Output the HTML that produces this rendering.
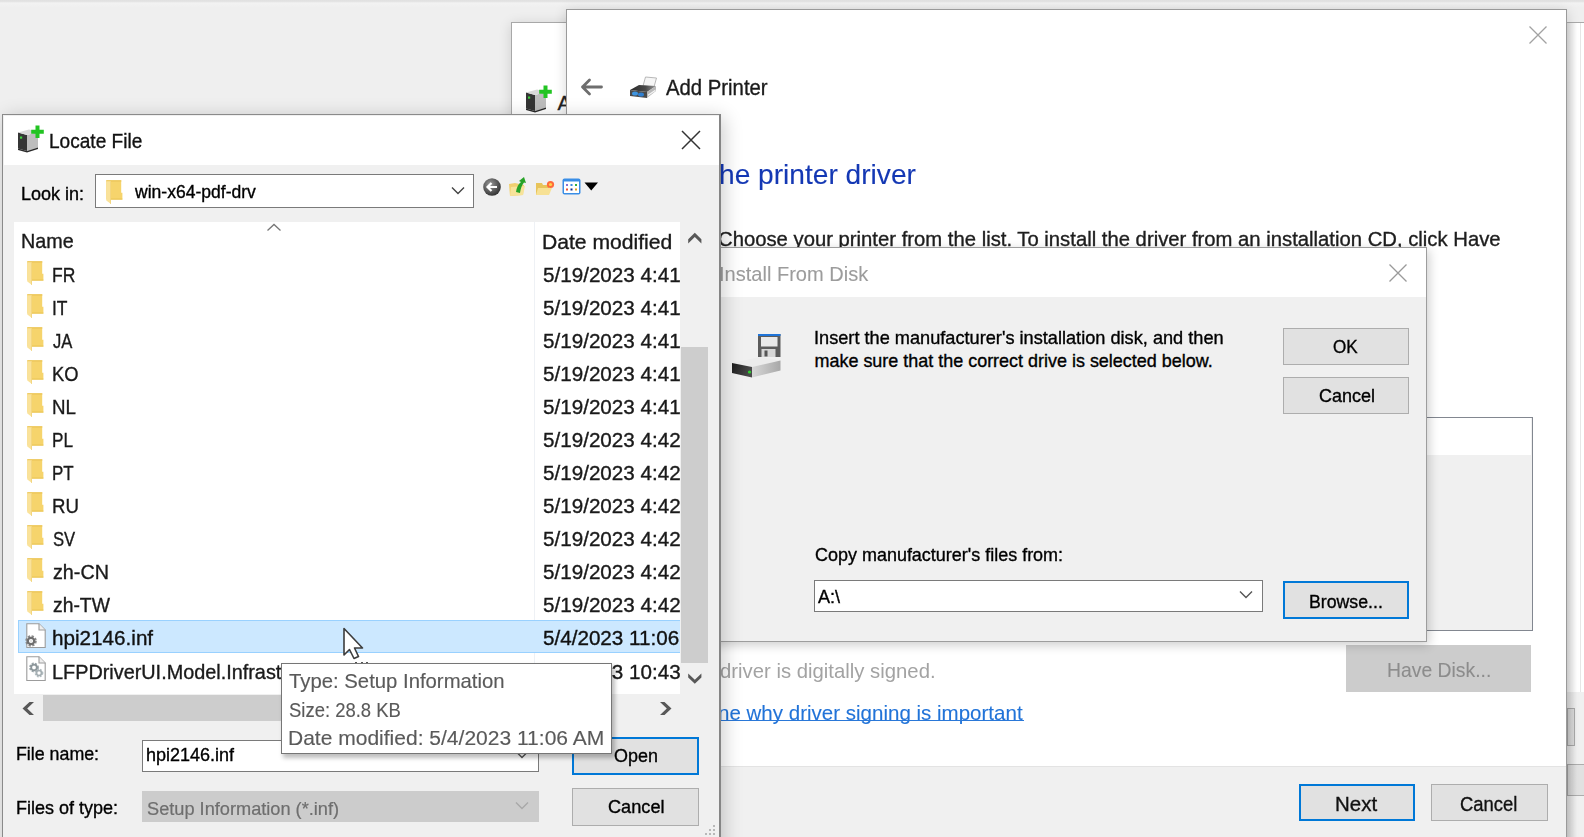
<!DOCTYPE html>
<html><head><meta charset="utf-8"><style>
html,body{margin:0;padding:0}
body{width:1584px;height:837px;overflow:hidden;position:relative;background:#efefef;font-family:'Liberation Sans',sans-serif}
div{box-sizing:border-box}
.t{position:absolute;white-space:nowrap;line-height:1;transform-origin:0 0;font-family:'Liberation Sans',sans-serif;-webkit-text-stroke:0.35px currentColor}
.a{position:absolute}

.win{position:absolute;background:#fff;border:1px solid #9b9b9b}
.btn{position:absolute;background:#e1e1e1;border:1px solid #adadad}
.btnf{position:absolute;background:#e1e1e1;border:2px solid #0078d7}

</style></head><body>
<div class="a" style="left:0;top:0;width:1584px;height:8px;background:linear-gradient(to bottom,#e0e0e0 0px,#e4e4e4 1.5px,#f2f2f2 3px,#efefef 8px)"></div>
<div class="a" style="left:1560px;top:22px;width:30px;height:820px;background:#fff;border-top:1px solid #a9a9a9"></div>
<div class="a" style="left:1566px;top:692px;width:20px;height:150px;background:#f0f0f0"></div>
<div class="a" style="left:1580px;top:23px;width:1px;height:669px;background:#e6e6e6"></div>
<div class="a" style="left:1567px;top:708px;width:8px;height:38px;border:1px solid #adadad;background:#e1e1e1"></div>
<div class="a" style="left:1567px;top:764px;width:20px;height:32px;border:1px solid #adadad;background:#e1e1e1"></div>
<div class="win" style="left:511px;top:22px;width:120px;height:200px;border-color:#a8a8a8;box-shadow:0 2px 12px rgba(0,0,0,0.14)"></div>
<svg class="a" style="left:525px;top:84px" width="28" height="29" viewBox="0 0 28 29">
<path d="M1 8.5 L10 11 L10 27 L1 24.5 Z" fill="#353535"/>
<path d="M10 11 L21 8 L21 23.5 L10 27 Z" fill="#bdbdbd"/>
<path d="M1 8.5 L12 5.5 L21 8 L10 11 Z" fill="#d9d9d9"/>
<path d="M1 24.5 L10 27 L21 23.5 L21 25 L10 28.5 L1 26 Z" fill="#2a2a2a"/>
<rect x="3" y="12.5" width="2.2" height="2.2" fill="#3fd13f"/>
<path d="M18.5 1.5h4v4.3h4.3v4h-4.3v4.3h-4v-4.3h-4.3v-4h4.3z" fill="#22c422"/>
</svg>
<div class="t" style="left:557.50px;top:92.81px;font-size:20.58px;color:#222;">A</div>
<div class="win" style="left:566px;top:9px;width:1001px;height:840px;border-color:#9a9a9a;box-shadow:0 2px 12px rgba(0,0,0,0.16)"></div>
<div class="a" style="left:1567px;top:23px;width:10px;height:820px;background:linear-gradient(to right,rgba(0,0,0,0.14),rgba(0,0,0,0))"></div>
<svg class="a" style="left:1528px;top:25px" width="20" height="20" viewBox="0 0 20 20"><path d="M1.5 1.5L18.5 18.5M18.5 1.5L1.5 18.5" stroke="#a2a2a2" stroke-width="1.25"/></svg>
<svg class="a" style="left:579px;top:77px" width="25" height="20" viewBox="0 0 25 20"><path d="M22.5 10H3.5M10.5 3L3.5 10L10.5 17" fill="none" stroke="#6e6e6e" stroke-width="2.8" stroke-linecap="round" stroke-linejoin="round"/></svg>
<svg class="a" style="left:628px;top:75px" width="31" height="25" viewBox="0 0 31 25">
<defs><linearGradient id="pg" x1="0" y1="0" x2="1" y2="0"><stop offset="0" stop-color="#2a2a2a"/><stop offset="0.6" stop-color="#4a4a4a"/><stop offset="1" stop-color="#9a9a9a"/></linearGradient></defs>
<path d="M15 11 L17.5 2 L28.5 3 L26 12 Z" fill="#f6f6f6" stroke="#b0b0b0" stroke-width="0.9"/>
<path d="M2 15 L11 10 L28 11 L19 17 Z" fill="url(#pg)"/>
<path d="M2 15 L19 17 L19 23 L2 21 Z" fill="#4a4a4a"/>
<path d="M19 17 L28 11 L28 16 L19 23 Z" fill="#b8b8b8"/>
<path d="M20 19.5 L27.5 14.5 L27.5 16 L20 21 Z" fill="#f4f4f4"/>
<ellipse cx="7" cy="18.5" rx="3" ry="2" fill="#3d94e0"/>
<ellipse cx="13" cy="19.5" rx="3" ry="2" fill="#2f7fd0"/>
</svg>
<div class="t" style="left:666.00px;top:78.17px;font-size:21.45px;color:#1b1b1b;transform:scaleX(0.9477);">Add Printer</div>
<div class="t" style="left:719.49px;top:161.15px;font-size:27.83px;color:#1438b4;transform:scaleX(1.0103);-webkit-text-stroke:0.1px #1438b4;">he printer driver</div>
<div class="t" style="left:717.97px;top:230.45px;font-size:19.71px;color:#1e1e1e;transform:scaleX(1.0296);">Choose your printer from the list. To install the driver from an installation CD, click Have</div>
<div class="a" style="left:1300px;top:416.5px;width:233px;height:214px;border:1px solid #828790;background:#f0f0f0"></div>
<div class="a" style="left:1301px;top:417.5px;width:230px;height:37.5px;background:#fff"></div>
<div class="t" style="left:719.50px;top:660.58px;font-size:20.14px;color:#a3a3a3;transform:scaleX(1.0092);-webkit-text-stroke:0;">driver is digitally signed.</div>
<div class="a" style="left:1346px;top:645px;width:185px;height:47px;background:#cccccc"></div>
<div class="t" style="left:1387.44px;top:660.48px;font-size:20.14px;color:#8c8c8c;transform:scaleX(0.9614);-webkit-text-stroke:0.1px #8c8c8c;">Have Disk...</div>
<div class="t" style="left:718.48px;top:703.48px;font-size:20.14px;color:#2173d8;transform:scaleX(1.0199);-webkit-text-stroke:0.1px #2173d8;">ne why driver signing is important</div>
<div class="a" style="left:719px;top:720px;width:305px;height:1.4px;background:#2a78d8"></div>
<div class="a" style="left:567px;top:766px;width:999px;height:80px;background:#f0f0f0;border-top:1px solid #e3e3e3"></div>
<div class="btnf" style="left:1299px;top:784px;width:116px;height:37px"></div>
<div class="t" style="left:1335.47px;top:795.42px;font-size:19.86px;color:#111;transform:scaleX(1.0301);">Next</div>
<div class="btn" style="left:1431px;top:784px;width:117px;height:37px"></div>
<div class="t" style="left:1460.07px;top:795.42px;font-size:19.86px;color:#111;transform:scaleX(0.9278);">Cancel</div>
<div class="a" style="left:690px;top:247px;width:737px;height:395px;background:#f0f0f0;border:1px solid #9d9d9d;box-shadow:2px 3px 10px rgba(0,0,0,0.2)"></div>
<div class="a" style="left:691px;top:248px;width:735px;height:49px;background:#fff"></div>
<div class="t" style="left:719.02px;top:264.13px;font-size:20.43px;color:#9c9c9c;transform:scaleX(0.9813);-webkit-text-stroke:0.1px #9c9c9c;">Install From Disk</div>
<svg class="a" style="left:1388px;top:263px" width="20" height="20" viewBox="0 0 20 20"><path d="M1.5 1.5L18.5 18.5M18.5 1.5L1.5 18.5" stroke="#9a9a9a" stroke-width="1.3"/></svg>
<svg class="a" style="left:730px;top:332px" width="53" height="47" viewBox="0 0 53 47">
<defs><linearGradient id="hf" x1="0" y1="0" x2="1" y2="0.3"><stop offset="0" stop-color="#1c1c1c"/><stop offset="1" stop-color="#4a4a4a"/></linearGradient>
<linearGradient id="hr" x1="0" y1="0" x2="1" y2="0"><stop offset="0" stop-color="#d8d8d8"/><stop offset="1" stop-color="#a8a8a8"/></linearGradient></defs>
<rect x="28" y="2" width="22.5" height="23" fill="#5c5c5c"/>
<rect x="28" y="2" width="22.5" height="2" fill="#1f74d8"/>
<rect x="31" y="5" width="16.5" height="9.5" fill="#e9e9e9"/>
<rect x="31.5" y="17" width="14" height="8" fill="#d6d6d6"/>
<rect x="34.5" y="18.5" width="3" height="6" fill="#555"/>
<path d="M2 31 L30 25 L50.5 28.5 L22 35 Z" fill="#ececec"/>
<path d="M2 31 L22 35 L22 45.5 L2 41 Z" fill="url(#hf)"/>
<path d="M22 35 L50.5 28.5 L50.5 38.5 L22 45.5 Z" fill="url(#hr)"/>
<circle cx="19.5" cy="40" r="1.6" fill="#2fd42f"/>
</svg>
<div class="t" style="left:814.49px;top:329.92px;font-size:17.97px;color:#000;transform:scaleX(1.0125);">Insert the manufacturer's installation disk, and then</div>
<div class="t" style="left:814.50px;top:352.72px;font-size:17.97px;color:#000;">make sure that the correct drive is selected below.</div>
<div class="btn" style="left:1283px;top:328px;width:126px;height:37px"></div>
<div class="t" style="left:1333.30px;top:337.78px;font-size:18.26px;color:#000;transform:scaleX(0.9353);">OK</div>
<div class="btn" style="left:1283px;top:377px;width:126px;height:37px"></div>
<div class="t" style="left:1318.50px;top:386.78px;font-size:18.26px;color:#000;transform:scaleX(0.9865);">Cancel</div>
<div class="t" style="left:814.80px;top:546.48px;font-size:18.26px;color:#000;transform:scaleX(0.9845);">Copy manufacturer's files from:</div>
<div class="a" style="left:814px;top:580px;width:449px;height:32px;background:#fff;border:1px solid #7a7a7a"></div>
<div class="t" style="left:818.00px;top:587.88px;font-size:18.26px;color:#000;transform:scaleX(0.9895);">A:\</div>
<svg class="a" style="left:1239px;top:590px" width="14" height="9" viewBox="0 0 14 9"><path d="M1 1.5L7 7.5L13 1.5" fill="none" stroke="#555" stroke-width="1.4"/></svg>
<div class="btnf" style="left:1283px;top:581px;width:126px;height:38px"></div>
<div class="t" style="left:1308.53px;top:592.78px;font-size:18.26px;color:#000;transform:scaleX(0.9703);">Browse...</div>
<div class="a" style="left:2px;top:114px;width:719px;height:740px;background:#f0f0f0;border:1.5px solid #8a8a8a;border-right:2px solid #858585;box-shadow:3px 3px 18px rgba(0,0,0,0.2)"></div>
<div class="a" style="left:3.5px;top:115.5px;width:715.5px;height:49.5px;background:#fff"></div>
<svg class="a" style="left:17px;top:124px" width="28" height="29" viewBox="0 0 28 29">
<path d="M1 8.5 L10 11 L10 27 L1 24.5 Z" fill="#353535"/>
<path d="M10 11 L21 8 L21 23.5 L10 27 Z" fill="#bdbdbd"/>
<path d="M1 8.5 L12 5.5 L21 8 L10 11 Z" fill="#d9d9d9"/>
<path d="M1 24.5 L10 27 L21 23.5 L21 25 L10 28.5 L1 26 Z" fill="#2a2a2a"/>
<rect x="3" y="12.5" width="2.2" height="2.2" fill="#3fd13f"/>
<path d="M18.5 1.5h4v4.3h4.3v4h-4.3v4.3h-4v-4.3h-4.3v-4h4.3z" fill="#22c422"/>
</svg>
<div class="t" style="left:48.87px;top:131.23px;font-size:20.43px;color:#111;transform:scaleX(0.9336);">Locate File</div>
<svg class="a" style="left:680px;top:129px" width="22" height="22" viewBox="0 0 22 22"><path d="M2 2L20 20M20 2L2 20" stroke="#333" stroke-width="1.5"/></svg>
<div class="t" style="left:21.03px;top:185.03px;font-size:18.55px;color:#000;transform:scaleX(0.9720);">Look in:</div>
<div class="a" style="left:95px;top:174px;width:379px;height:34px;background:#fff;border:1px solid #7a7a7a"></div>
<svg class="a" style="left:106px;top:180px" width="18" height="26" viewBox="0 0 18 26">
<path d="M0.3 0.3 H15.2 V12.8 H16.4 V19.6 H0.3 Z" fill="#f6d46c"/>
<rect x="0.3" y="0.3" width="15" height="1.3" fill="#ecc65a"/>
<rect x="4.8" y="18.6" width="11.6" height="1" fill="#e9c350"/>
<path d="M0.3 1.2 H5 V24 L0.3 20.4 Z" fill="#fae29a"/>
<path d="M4.4 1.2 H5 V24 H4.4Z" fill="#efcf72"/>
</svg>
<div class="t" style="left:134.99px;top:184.27px;font-size:17.68px;color:#000;transform:scaleX(0.9923);">win-x64-pdf-drv</div>
<svg class="a" style="left:451px;top:186px" width="14" height="9" viewBox="0 0 14 9"><path d="M1 1.5L7 7.5L13 1.5" fill="none" stroke="#444" stroke-width="1.4"/></svg>
<svg class="a" style="left:482px;top:177px" width="20" height="20" viewBox="0 0 20 20">
<defs><radialGradient id="gb" cx="0.4" cy="0.35" r="0.7"><stop offset="0" stop-color="#9a9a9a"/><stop offset="1" stop-color="#2e2e2e"/></radialGradient></defs>
<circle cx="10" cy="10" r="8.8" fill="url(#gb)"/>
<path d="M15 10H6M9.5 6L5.5 10L9.5 14" fill="none" stroke="#fff" stroke-width="2.2"/>
</svg>
<svg class="a" style="left:508px;top:176px" width="20" height="21" viewBox="0 0 20 21">
<path d="M1 8 L7 7 L16 9 L15 19 L2 20 Z" fill="#f0d070"/>
<path d="M3 11 L17 10 L15 19 L2 20 Z" fill="#f7e39a"/>
<path d="M8 16 Q9 9 13 6 L11 5 L16 1 L18 7 L16 6.5 Q13 10 12 17 Z" fill="#27a327"/>
</svg>
<svg class="a" style="left:535px;top:180px" width="20" height="16" viewBox="0 0 20 16">
<path d="M1 3 L7 3 L8 5 L14 5 L14 15 L1 15 Z" fill="#e8c45a"/>
<path d="M3 8 L17 8 L14 15 L1 15 Z" fill="#f7e194"/>
<circle cx="15.5" cy="4.5" r="3.6" fill="#ff6a3a"/><circle cx="15.5" cy="4.5" r="1.6" fill="#ffd24a"/>
</svg>
<svg class="a" style="left:562px;top:178px" width="19" height="17" viewBox="0 0 19 17">
<rect x="0.5" y="0.5" width="18" height="16" rx="2" fill="#3a8ee6"/>
<rect x="2" y="3.5" width="15" height="11.5" fill="#fff"/>
<rect x="4" y="6" width="2" height="2" fill="#8a6fd0"/><rect x="8.5" y="6" width="2" height="2" fill="#3b8be0"/><rect x="13" y="6" width="2" height="2" fill="#30b040"/>
<rect x="4" y="10.5" width="2" height="2" fill="#f05030"/><rect x="8.5" y="10.5" width="2" height="2" fill="#0a2a90"/><rect x="13" y="10.5" width="2" height="2" fill="#e0a020"/>
</svg>
<svg class="a" style="left:584px;top:182px" width="15" height="9" viewBox="0 0 15 9"><path d="M0.5 0.5H14L7.25 8.5Z" fill="#000"/></svg>
<div class="a" style="left:14px;top:222px;width:666px;height:472px;background:#fff"></div>
<div class="a" style="left:534px;top:222px;width:1px;height:472px;background:#eef1f5"></div>
<svg class="a" style="left:266px;top:223px" width="16" height="9" viewBox="0 0 16 9"><path d="M1.5 7.5L8 1.5L14.5 7.5" fill="none" stroke="#777" stroke-width="1.3"/></svg>
<div class="t" style="left:20.52px;top:231.38px;font-size:20.14px;color:#1a1a1a;transform:scaleX(0.9811);">Name</div>
<div class="t" style="left:541.65px;top:231.68px;font-size:20.14px;color:#1a1a1a;transform:scaleX(1.0494);">Date modified</div>
<div class="a" style="left:680px;top:222px;width:28px;height:472px;background:#f0f0f0"></div>
<div class="a" style="left:681px;top:347px;width:27px;height:316px;background:#cdcdcd"></div>
<svg class="a" style="left:687px;top:232px" width="16" height="13" viewBox="0 0 16 13"><path d="M1.2 7.2 L7.8 0.8 L14.4 7.2 L14.4 11.4 L7.8 5 L1.2 11.4 Z" fill="#585858"/></svg>
<svg class="a" style="left:687px;top:672px" width="16" height="13" viewBox="0 0 16 13"><path d="M1.2 5.4 L7.8 11.8 L14.4 5.4 L14.4 1.4 L7.8 7.8 L1.2 1.4 Z" fill="#585858"/></svg>
<div class="a" style="left:14px;top:694px;width:666px;height:27px;background:#f0f0f0"></div>
<div class="a" style="left:43px;top:695px;width:310px;height:26px;background:#cdcdcd"></div>
<svg class="a" style="left:21px;top:701px" width="15" height="15" viewBox="0 0 15 15"><path d="M8.5 1 L1.5 7.5 L8.5 14 L13 14 L6.2 7.5 L13 1 Z" fill="#585858"/></svg>
<svg class="a" style="left:658px;top:701px" width="15" height="15" viewBox="0 0 15 15"><path d="M6.5 1 L13.5 7.5 L6.5 14 L2 14 L8.8 7.5 L2 1 Z" fill="#585858"/></svg>
<div class="a" style="left:18px;top:620px;width:662px;height:33px;background:#cce8ff;border:1px solid #99d1ff;border-right:none"></div>
<svg class="a" style="left:27px;top:261px" width="18" height="26" viewBox="0 0 18 26">
<path d="M0.3 0.3 H15.2 V12.8 H16.4 V19.6 H0.3 Z" fill="#f6d46c"/>
<rect x="0.3" y="0.3" width="15" height="1.3" fill="#ecc65a"/>
<rect x="4.8" y="18.6" width="11.6" height="1" fill="#e9c350"/>
<path d="M0.3 1.2 H5 V24 L0.3 20.4 Z" fill="#fae29a"/>
<path d="M4.4 1.2 H5 V24 H4.4Z" fill="#efcf72"/>
</svg>
<div class="t" style="left:52.33px;top:265.38px;font-size:20.14px;color:#1a1a1a;transform:scaleX(0.8698);">FR</div>
<div class="a" style="left:535px;top:259.7px;width:145px;height:30px;overflow:hidden">
<div class="t" style="left:7.70px;top:5.68px;font-size:20.14px;color:#1a1a1a;transform:scaleX(1.0250);">5/19/2023 4:41</div>
</div>
<svg class="a" style="left:27px;top:294px" width="18" height="26" viewBox="0 0 18 26">
<path d="M0.3 0.3 H15.2 V12.8 H16.4 V19.6 H0.3 Z" fill="#f6d46c"/>
<rect x="0.3" y="0.3" width="15" height="1.3" fill="#ecc65a"/>
<rect x="4.8" y="18.6" width="11.6" height="1" fill="#e9c350"/>
<path d="M0.3 1.2 H5 V24 L0.3 20.4 Z" fill="#fae29a"/>
<path d="M4.4 1.2 H5 V24 H4.4Z" fill="#efcf72"/>
</svg>
<div class="t" style="left:52.33px;top:298.38px;font-size:20.14px;color:#1a1a1a;transform:scaleX(0.8679);">IT</div>
<div class="a" style="left:535px;top:292.7px;width:145px;height:30px;overflow:hidden">
<div class="t" style="left:7.70px;top:5.68px;font-size:20.14px;color:#1a1a1a;transform:scaleX(1.0250);">5/19/2023 4:41</div>
</div>
<svg class="a" style="left:27px;top:327px" width="18" height="26" viewBox="0 0 18 26">
<path d="M0.3 0.3 H15.2 V12.8 H16.4 V19.6 H0.3 Z" fill="#f6d46c"/>
<rect x="0.3" y="0.3" width="15" height="1.3" fill="#ecc65a"/>
<rect x="4.8" y="18.6" width="11.6" height="1" fill="#e9c350"/>
<path d="M0.3 1.2 H5 V24 L0.3 20.4 Z" fill="#fae29a"/>
<path d="M4.4 1.2 H5 V24 H4.4Z" fill="#efcf72"/>
</svg>
<div class="t" style="left:53.20px;top:331.38px;font-size:20.14px;color:#1a1a1a;transform:scaleX(0.8229);">JA</div>
<div class="a" style="left:535px;top:325.7px;width:145px;height:30px;overflow:hidden">
<div class="t" style="left:7.70px;top:5.68px;font-size:20.14px;color:#1a1a1a;transform:scaleX(1.0250);">5/19/2023 4:41</div>
</div>
<svg class="a" style="left:27px;top:360px" width="18" height="26" viewBox="0 0 18 26">
<path d="M0.3 0.3 H15.2 V12.8 H16.4 V19.6 H0.3 Z" fill="#f6d46c"/>
<rect x="0.3" y="0.3" width="15" height="1.3" fill="#ecc65a"/>
<rect x="4.8" y="18.6" width="11.6" height="1" fill="#e9c350"/>
<path d="M0.3 1.2 H5 V24 L0.3 20.4 Z" fill="#fae29a"/>
<path d="M4.4 1.2 H5 V24 H4.4Z" fill="#efcf72"/>
</svg>
<div class="t" style="left:52.29px;top:364.38px;font-size:20.14px;color:#1a1a1a;transform:scaleX(0.9116);">KO</div>
<div class="a" style="left:535px;top:358.7px;width:145px;height:30px;overflow:hidden">
<div class="t" style="left:7.70px;top:5.68px;font-size:20.14px;color:#1a1a1a;transform:scaleX(1.0250);">5/19/2023 4:41</div>
</div>
<svg class="a" style="left:27px;top:393px" width="18" height="26" viewBox="0 0 18 26">
<path d="M0.3 0.3 H15.2 V12.8 H16.4 V19.6 H0.3 Z" fill="#f6d46c"/>
<rect x="0.3" y="0.3" width="15" height="1.3" fill="#ecc65a"/>
<rect x="4.8" y="18.6" width="11.6" height="1" fill="#e9c350"/>
<path d="M0.3 1.2 H5 V24 L0.3 20.4 Z" fill="#fae29a"/>
<path d="M4.4 1.2 H5 V24 H4.4Z" fill="#efcf72"/>
</svg>
<div class="t" style="left:52.27px;top:397.38px;font-size:20.14px;color:#1a1a1a;transform:scaleX(0.9293);">NL</div>
<div class="a" style="left:535px;top:391.7px;width:145px;height:30px;overflow:hidden">
<div class="t" style="left:7.70px;top:5.68px;font-size:20.14px;color:#1a1a1a;transform:scaleX(1.0250);">5/19/2023 4:41</div>
</div>
<svg class="a" style="left:27px;top:426px" width="18" height="26" viewBox="0 0 18 26">
<path d="M0.3 0.3 H15.2 V12.8 H16.4 V19.6 H0.3 Z" fill="#f6d46c"/>
<rect x="0.3" y="0.3" width="15" height="1.3" fill="#ecc65a"/>
<rect x="4.8" y="18.6" width="11.6" height="1" fill="#e9c350"/>
<path d="M0.3 1.2 H5 V24 L0.3 20.4 Z" fill="#fae29a"/>
<path d="M4.4 1.2 H5 V24 H4.4Z" fill="#efcf72"/>
</svg>
<div class="t" style="left:52.35px;top:430.38px;font-size:20.14px;color:#1a1a1a;transform:scaleX(0.8539);">PL</div>
<div class="a" style="left:535px;top:424.7px;width:145px;height:30px;overflow:hidden">
<div class="t" style="left:7.70px;top:5.68px;font-size:20.14px;color:#1a1a1a;transform:scaleX(1.0250);">5/19/2023 4:42</div>
</div>
<svg class="a" style="left:27px;top:459px" width="18" height="26" viewBox="0 0 18 26">
<path d="M0.3 0.3 H15.2 V12.8 H16.4 V19.6 H0.3 Z" fill="#f6d46c"/>
<rect x="0.3" y="0.3" width="15" height="1.3" fill="#ecc65a"/>
<rect x="4.8" y="18.6" width="11.6" height="1" fill="#e9c350"/>
<path d="M0.3 1.2 H5 V24 L0.3 20.4 Z" fill="#fae29a"/>
<path d="M4.4 1.2 H5 V24 H4.4Z" fill="#efcf72"/>
</svg>
<div class="t" style="left:52.36px;top:463.38px;font-size:20.14px;color:#1a1a1a;transform:scaleX(0.8435);">PT</div>
<div class="a" style="left:535px;top:457.7px;width:145px;height:30px;overflow:hidden">
<div class="t" style="left:7.70px;top:5.68px;font-size:20.14px;color:#1a1a1a;transform:scaleX(1.0250);">5/19/2023 4:42</div>
</div>
<svg class="a" style="left:27px;top:492px" width="18" height="26" viewBox="0 0 18 26">
<path d="M0.3 0.3 H15.2 V12.8 H16.4 V19.6 H0.3 Z" fill="#f6d46c"/>
<rect x="0.3" y="0.3" width="15" height="1.3" fill="#ecc65a"/>
<rect x="4.8" y="18.6" width="11.6" height="1" fill="#e9c350"/>
<path d="M0.3 1.2 H5 V24 L0.3 20.4 Z" fill="#fae29a"/>
<path d="M4.4 1.2 H5 V24 H4.4Z" fill="#efcf72"/>
</svg>
<div class="t" style="left:52.27px;top:496.38px;font-size:20.14px;color:#1a1a1a;transform:scaleX(0.9271);">RU</div>
<div class="a" style="left:535px;top:490.7px;width:145px;height:30px;overflow:hidden">
<div class="t" style="left:7.70px;top:5.68px;font-size:20.14px;color:#1a1a1a;transform:scaleX(1.0250);">5/19/2023 4:42</div>
</div>
<svg class="a" style="left:27px;top:525px" width="18" height="26" viewBox="0 0 18 26">
<path d="M0.3 0.3 H15.2 V12.8 H16.4 V19.6 H0.3 Z" fill="#f6d46c"/>
<rect x="0.3" y="0.3" width="15" height="1.3" fill="#ecc65a"/>
<rect x="4.8" y="18.6" width="11.6" height="1" fill="#e9c350"/>
<path d="M0.3 1.2 H5 V24 L0.3 20.4 Z" fill="#fae29a"/>
<path d="M4.4 1.2 H5 V24 H4.4Z" fill="#efcf72"/>
</svg>
<div class="t" style="left:53.20px;top:529.38px;font-size:20.14px;color:#1a1a1a;transform:scaleX(0.8278);">SV</div>
<div class="a" style="left:535px;top:523.7px;width:145px;height:30px;overflow:hidden">
<div class="t" style="left:7.70px;top:5.68px;font-size:20.14px;color:#1a1a1a;transform:scaleX(1.0250);">5/19/2023 4:42</div>
</div>
<svg class="a" style="left:27px;top:558px" width="18" height="26" viewBox="0 0 18 26">
<path d="M0.3 0.3 H15.2 V12.8 H16.4 V19.6 H0.3 Z" fill="#f6d46c"/>
<rect x="0.3" y="0.3" width="15" height="1.3" fill="#ecc65a"/>
<rect x="4.8" y="18.6" width="11.6" height="1" fill="#e9c350"/>
<path d="M0.3 1.2 H5 V24 L0.3 20.4 Z" fill="#fae29a"/>
<path d="M4.4 1.2 H5 V24 H4.4Z" fill="#efcf72"/>
</svg>
<div class="t" style="left:52.60px;top:562.38px;font-size:20.14px;color:#1a1a1a;transform:scaleX(0.9803);">zh-CN</div>
<div class="a" style="left:535px;top:556.7px;width:145px;height:30px;overflow:hidden">
<div class="t" style="left:7.70px;top:5.68px;font-size:20.14px;color:#1a1a1a;transform:scaleX(1.0250);">5/19/2023 4:42</div>
</div>
<svg class="a" style="left:27px;top:591px" width="18" height="26" viewBox="0 0 18 26">
<path d="M0.3 0.3 H15.2 V12.8 H16.4 V19.6 H0.3 Z" fill="#f6d46c"/>
<rect x="0.3" y="0.3" width="15" height="1.3" fill="#ecc65a"/>
<rect x="4.8" y="18.6" width="11.6" height="1" fill="#e9c350"/>
<path d="M0.3 1.2 H5 V24 L0.3 20.4 Z" fill="#fae29a"/>
<path d="M4.4 1.2 H5 V24 H4.4Z" fill="#efcf72"/>
</svg>
<div class="t" style="left:52.60px;top:595.38px;font-size:20.14px;color:#1a1a1a;transform:scaleX(0.9603);">zh-TW</div>
<div class="a" style="left:535px;top:589.7px;width:145px;height:30px;overflow:hidden">
<div class="t" style="left:7.70px;top:5.68px;font-size:20.14px;color:#1a1a1a;transform:scaleX(1.0250);">5/19/2023 4:42</div>
</div>
<svg class="a" style="left:25px;top:623px" width="22" height="27" viewBox="0 0 22 27">
<path d="M1.8 0.8 H14 L20.2 7 V24.5 H1.8 Z" fill="#fff" stroke="#9c9c9c" stroke-width="1.1"/>
<path d="M14 0.8 V7 H20.2" fill="#eee" stroke="#9c9c9c" stroke-width="1.1"/>
<circle cx="6" cy="18" r="4.2" fill="none" stroke="#8a8a8a" stroke-width="3.2" stroke-dasharray="2 1.3"/><circle cx="6" cy="18" r="3.2" fill="none" stroke="#6f6f6f" stroke-width="2.2"/><circle cx="6" cy="18" r="1.4" fill="#e8e8e8"/>
</svg>
<div class="t" style="left:51.97px;top:628.38px;font-size:20.14px;color:#111;transform:scaleX(1.0268);">hpi2146.inf</div>
<div class="a" style="left:535px;top:622.7px;width:145px;height:30px;overflow:hidden">
<div class="t" style="left:7.70px;top:5.68px;font-size:20.14px;color:#111;transform:scaleX(1.0250);">5/4/2023 11:06</div>
</div>
<svg class="a" style="left:25px;top:656px" width="22" height="27" viewBox="0 0 22 27">
<path d="M1.8 0.8 H14 L20.2 7 V24.5 H1.8 Z" fill="#fff" stroke="#9c9c9c" stroke-width="1.1"/>
<path d="M14 0.8 V7 H20.2" fill="#eee" stroke="#9c9c9c" stroke-width="1.1"/>
<circle cx="9" cy="11.5" r="3.6" fill="none" stroke="#9aa4a8" stroke-width="2.6" stroke-dasharray="1.8 1.1"/><circle cx="9" cy="11.5" r="2.8" fill="none" stroke="#8c969a" stroke-width="1.8"/><circle cx="14" cy="17" r="3.2" fill="none" stroke="#b4bec2" stroke-width="2.4" stroke-dasharray="1.6 1"/><circle cx="14" cy="17" r="2.5" fill="none" stroke="#a4aeb2" stroke-width="1.6"/>
</svg>
<div class="t" style="left:52.01px;top:662.18px;font-size:20.14px;color:#1a1a1a;transform:scaleX(0.9859);">LFPDriverUI.Model.Infrastructure.dll</div>
<div class="a" style="left:535px;top:655.7px;width:145px;height:30px;overflow:hidden;background:#fff">
<div class="t" style="left:7.70px;top:6.68px;font-size:20.14px;color:#1a1a1a;transform:scaleX(1.0250);">5/4/2023 10:43</div>
</div>
<div class="t" style="left:15.54px;top:744.53px;font-size:18.55px;color:#000;transform:scaleX(0.9601);">File name:</div>
<div class="a" style="left:142px;top:740px;width:397px;height:32px;background:#fff;border:1px solid #7a7a7a"></div>
<div class="t" style="left:146.01px;top:746.28px;font-size:18.26px;color:#000;transform:scaleX(0.9862);">hpi2146.inf</div>
<svg class="a" style="left:515px;top:750px" width="14" height="9" viewBox="0 0 14 9"><path d="M1 1.5L7 7.5L13 1.5" fill="none" stroke="#555" stroke-width="1.4"/></svg>
<div class="t" style="left:15.53px;top:799.03px;font-size:18.55px;color:#000;transform:scaleX(0.9718);">Files of type:</div>
<div class="a" style="left:142px;top:791px;width:397px;height:31px;background:#cccccc"></div>
<div class="t" style="left:146.70px;top:800.28px;font-size:18.26px;color:#6e6e6e;transform:scaleX(0.9966);-webkit-text-stroke:0.2px #6e6e6e;">Setup Information (*.inf)</div>
<svg class="a" style="left:515px;top:801px" width="14" height="9" viewBox="0 0 14 9"><path d="M1 1.5L7 7.5L13 1.5" fill="none" stroke="#a8a8a8" stroke-width="1.4"/></svg>
<div class="btnf" style="left:572px;top:737px;width:127px;height:38px"></div>
<div class="t" style="left:614.00px;top:746.91px;font-size:18.70px;color:#000;transform:scaleX(0.9598);">Open</div>
<div class="btn" style="left:572px;top:788px;width:127px;height:38px"></div>
<div class="t" style="left:608.00px;top:797.88px;font-size:18.26px;color:#000;transform:scaleX(0.9954);">Cancel</div>
<svg class="a" style="left:703px;top:823px" width="14" height="14" viewBox="0 0 14 14"><g fill="#b8b8b8"><rect x="10" y="2" width="2" height="2"/><rect x="6" y="6" width="2" height="2"/><rect x="10" y="6" width="2" height="2"/><rect x="2" y="10" width="2" height="2"/><rect x="6" y="10" width="2" height="2"/><rect x="10" y="10" width="2" height="2"/></g></svg>
<div class="a" style="left:355px;top:661.6px;width:2.4px;height:2px;background:#555"></div>
<div class="a" style="left:360.5px;top:661.6px;width:2.4px;height:2px;background:#555"></div>
<div class="a" style="left:365.5px;top:661.6px;width:2.4px;height:2px;background:#555"></div>
<div class="a" style="left:283px;top:666px;width:332px;height:92px;background:rgba(0,0,0,0.25);filter:blur(2px)"></div>
<div class="a" style="left:281px;top:663px;width:331px;height:91px;background:#fff;border:1px solid #767676"></div>
<div class="t" style="left:288.60px;top:671.36px;font-size:20.87px;color:#5a5a5a;transform:scaleX(0.9734);-webkit-text-stroke:0.15px #5a5a5a;">Type: Setup Information</div>
<div class="t" style="left:288.60px;top:699.86px;font-size:20.87px;color:#5a5a5a;transform:scaleX(0.8846);-webkit-text-stroke:0.15px #5a5a5a;">Size: 28.8 KB</div>
<div class="t" style="left:287.59px;top:728.06px;font-size:20.87px;color:#5a5a5a;transform:scaleX(1.0075);-webkit-text-stroke:0.15px #5a5a5a;">Date modified: 5/4/2023 11:06 AM</div>
<svg class="a" style="left:340px;top:625px" width="28" height="38" viewBox="0 0 28 38">
<path d="M4 3.5 L4 30 L9.5 24.5 L14 33.5 L18.5 31.5 L14.5 23 L22.5 23 Z" fill="#fff" stroke="#3c3c3c" stroke-width="1.6" stroke-linejoin="round"/>
</svg>
</body></html>
